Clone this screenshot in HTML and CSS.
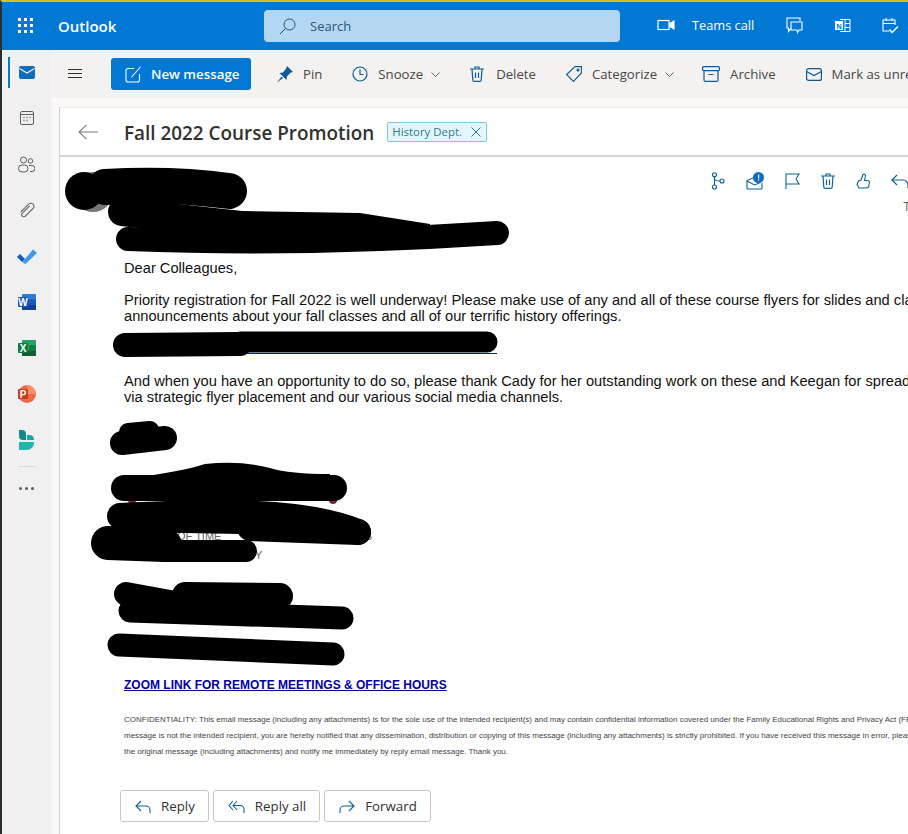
FILE: index.html
```html
<!DOCTYPE html>
<html lang="en">
<head>
  <meta charset="UTF-8">
  <title>Mail - Outlook</title>
  <link rel="stylesheet" href="styles.css">
</head>
<body>

<!-- Top bar -->
<header class="topbar">
  <div class="brand">
    <svg class="waffle" width="16" height="16" viewBox="0 0 16 16" fill="#fff">
      <rect x="0" y="0" width="3" height="3"/><rect x="6" y="0" width="3" height="3"/><rect x="12" y="0" width="3" height="3"/>
      <rect x="0" y="6" width="3" height="3"/><rect x="6" y="6" width="3" height="3"/><rect x="12" y="6" width="3" height="3"/>
      <rect x="0" y="12" width="3" height="3"/><rect x="6" y="12" width="3" height="3"/><rect x="12" y="12" width="3" height="3"/>
    </svg>
    <span class="brand-name">Outlook</span>
  </div>
  <div class="search">
    <svg width="17" height="17" viewBox="0 0 17 17" fill="none" stroke="#1d4f7c" stroke-width="1"><circle cx="10.500" cy="6.500" r="5.500"/><path d="M6.500 10.500L1 16"/></svg>
    <span>Search</span>
  </div>
  <div class="top-actions">
    <svg class="teams-icon" width="18" height="12" viewBox="0 0 18 12" fill="none" stroke="#fff" stroke-width="1.200"><rect x="1" y="1.500" width="11" height="9"/><path d="M12 5l5-3v8l-5-3" fill="#fff"/></svg>
    <span class="teams-label">Teams call</span>
    <svg class="top-icon" width="17" height="17" viewBox="0 0 17 17" fill="none" stroke="#fff" stroke-width="1.100"><path d="M14 4V1H1v10h1.500v3.500L5 11"/><path d="M5 5h11v8h-3l-1.500 2.500L11 13H5z"/></svg>
    <svg class="top-icon" width="17" height="17" viewBox="0 0 17 17" fill="none" stroke="#fff" stroke-width="1"><path d="M6 2.500h10v12H6"/><path d="M11 2.500v12M11 6.500h5M11 10.500h5"/><rect x="1" y="4" width="8" height="9" fill="#fff" stroke="none"/><text x="5" y="11.500" class="onenote-n">N</text></svg>
    <svg class="top-icon" width="17" height="17" viewBox="0 0 17 17" fill="none" stroke="#fff" stroke-width="1.100"><path d="M7 14H1V3h12v5"/><path d="M1 6.500h12M4 1v3M10 1v3"/><path d="M7.500 12.500l2.500 3 6-6" stroke-width="1.500"/></svg>
  </div>
</header>

<div class="app">

  <!-- App rail -->
  <nav class="rail">
    <div class="rail-item active">
      <svg width="16" height="13" viewBox="0 0 16 13"><rect width="16" height="13" rx="2" fill="#0f6cbd"/><path d="M0.500 2.500L8 7l7.500-4.500" fill="none" stroke="#f0f0f0" stroke-width="1.200"/></svg>
    </div>
    <div class="rail-item">
      <svg width="14" height="14" viewBox="0 0 14 14" fill="none" stroke="#5f5e5c"><rect x="0.500" y="0.500" width="13" height="13" rx="1.500"/><path d="M0.500 3.500h13"/><path d="M3.500 6.500h1M6.500 6.500h1M9.500 6.500h1M3.500 9.500h1M6.500 9.500h1" stroke-width="1.500"/></svg>
    </div>
    <div class="rail-item">
      <svg width="17" height="17" viewBox="0 0 17 17" fill="none" stroke="#5f5e5c"><circle cx="5.500" cy="4" r="3"/><circle cx="12.500" cy="5" r="2.300"/><rect x="0.500" y="9" width="9.500" height="7" rx="3.500"/><path d="M11 9.500h3a2.500 2.500 0 0 1 0 6h-2"/></svg>
    </div>
    <div class="rail-item">
      <svg width="16" height="17" viewBox="0 0 16 17" fill="none" stroke="#6b6a68" stroke-width="1.100"><path d="M10.500 4L3 11.500a2.200 2.200 0 0 0 3 3L14 6.500a3 3 0 0 0-4.300-4.300L1.800 10"/></svg>
    </div>
    <div class="rail-item">
      <svg width="20" height="15" viewBox="0 0 20 15"><path d="M0 8l3-3 5 5-3 3z" fill="#195abd"/><path d="M5 13l3-3 8-9.500L20 4 8.500 15z" fill="#3f97ea"/></svg>
    </div>
    <div class="rail-item">
      <svg width="18" height="16" viewBox="0 0 18 16"><rect x="4" width="14" height="16" rx="1" fill="#2b7cd3"/><rect x="4" y="5.300" width="14" height="5.400" fill="#185abd"/><rect x="4" y="10.700" width="14" height="5.300" fill="#103f91"/><rect y="3" width="10" height="10" rx="1" fill="#1f56a8"/><text x="5" y="11.500" class="office-letter">W</text></svg>
    </div>
    <div class="rail-item">
      <svg width="18" height="16" viewBox="0 0 18 16"><rect x="4" width="14" height="16" rx="1" fill="#21a366"/><rect x="11" y="5.300" width="7" height="5.400" fill="#107c41"/><rect x="4" y="10.700" width="14" height="5.300" fill="#185c37"/><rect y="3" width="10" height="10" rx="1" fill="#107c41"/><text x="5" y="11.500" class="office-letter">X</text></svg>
    </div>
    <div class="rail-item">
      <svg width="18" height="18" viewBox="0 0 18 18"><circle cx="9" cy="9" r="9" fill="#ed6c47"/><path d="M9 0a9 9 0 0 1 9 9H9z" fill="#ff8f6b"/><rect y="4" width="10" height="10" rx="1" fill="#c43e1c"/><text x="5" y="12.500" class="office-letter">P</text></svg>
    </div>
    <div class="rail-item">
      <svg width="15" height="20" viewBox="0 0 15 20"><path d="M0 0h3a4 4 0 0 1 4 4v6H4a4 4 0 0 1-4-4z" fill="#0f8a84"/><path d="M8 5h2.500A4.500 4.500 0 0 1 15 9.500V10H8z" fill="#15a8a0"/><path d="M0 12h15a7.500 7.500 0 0 1-7.500 8H0z" fill="#1fb8ad"/></svg>
    </div>
    <div class="rail-sep"></div>
    <div class="rail-more"><span></span><span></span><span></span></div>
  </nav>

  <main class="main">

    <!-- Command bar -->
    <div class="toolbar">
      <svg class="hamburger" width="14" height="10" viewBox="0 0 14 10" stroke="#323130"><path d="M0 .5h14M0 4.500h14M0 8.500h14"/></svg>
      <button class="new-msg">
        <svg width="17" height="17" viewBox="0 0 17 17" fill="none" stroke="#fff" stroke-width="1.100"><path d="M9 2.500H3a2 2 0 0 0-2 2V14a2 2 0 0 0 2 2h9.500a2 2 0 0 0 2-2V8"/><path d="M6.500 11L15.500 1"/></svg>
        New message
      </button>
      <div class="cmd">
        <svg width="16" height="17" viewBox="0 0 16 17" fill="#0f5a94"><path d="M10 0l6 6-2.500.8L10 10.500 9.500 14 2.500 7l3.500-.5L9.200 2.500z"/><path d="M4.500 10.500L0 16.500l6-4.500z"/></svg>
        <span>Pin</span>
      </div>
      <div class="cmd">
        <svg width="16" height="16" viewBox="0 0 16 16" fill="none" stroke="#0f5a94" stroke-width="1.200"><circle cx="8" cy="8" r="7"/><path d="M8 3.500V8.500h3.500"/></svg>
        <span>Snooze</span>
        <svg class="chev" width="9" height="5" viewBox="0 0 9 5" fill="none" stroke="#605e5c"><path d="M.5.500l4 4 4-4"/></svg>
      </div>
      <div class="cmd cmd-delete">
        <svg width="14" height="16" viewBox="0 0 14 16" fill="none" stroke="#0f5a94" stroke-width="1.200"><path d="M0 3h14M5 3V1h4v2"/><path d="M2 3l.8 11a1.500 1.500 0 0 0 1.500 1.400h5.400a1.500 1.500 0 0 0 1.500-1.400L12 3"/><path d="M5.500 6.500v5.500M8.500 6.500v5.500"/></svg>
        <span>Delete</span>
      </div>
      <div class="cmd">
        <svg width="16" height="16" viewBox="0 0 16 16" fill="none" stroke="#0f5a94" stroke-width="1.100"><path d="M9 .6h6.400V7L7.500 15.400.6 8.500z"/><circle cx="12" cy="4" r="1" fill="#0f5a94"/></svg>
        <span>Categorize</span>
        <svg class="chev" width="9" height="5" viewBox="0 0 9 5" fill="none" stroke="#605e5c"><path d="M.5.500l4 4 4-4"/></svg>
      </div>
      <div class="cmd cmd-archive">
        <svg width="18" height="16" viewBox="0 0 18 16" fill="none" stroke="#0f5a94" stroke-width="1.200"><rect x=".6" y=".6" width="16.800" height="4" rx="1"/><path d="M2 4.600V14a1.500 1.500 0 0 0 1.500 1.400h11A1.500 1.500 0 0 0 16 14V4.600M6.500 8.500h5"/></svg>
        <span>Archive</span>
      </div>
      <div class="cmd">
        <svg width="16" height="13" viewBox="0 0 16 13" fill="none" stroke="#0f5a94" stroke-width="1.200"><rect x=".6" y=".6" width="14.800" height="11.800" rx="2"/><path d="M.6 3.500L8 7.500l7.400-4"/></svg>
        <span>Mark as unread</span>
      </div>
    </div>

    <!-- Reading pane -->
    <section class="pane">
      <div class="subject-bar">
        <svg class="back" width="20" height="16" viewBox="0 0 20 16" fill="none" stroke="#7a7978" stroke-width="1.100"><path d="M20 8H1M8.500.8L1 8l7.500 7.200"/></svg>
        <h1 class="subject">Fall 2022 Course Promotion</h1>
        <span class="tag">History Dept.
          <svg width="10" height="10" viewBox="0 0 10 10" stroke="#38707f"><path d="M.5.500l9 9M9.500.500l-9 9"/></svg>
        </span>
      </div>

      <div class="message">
        <div class="msg-actions">
          <svg width="14" height="18" viewBox="0 0 14 18" fill="none" stroke="#0f6292" stroke-width="1.100"><circle cx="3.500" cy="2.800" r="2"/><circle cx="3.500" cy="15" r="2"/><circle cx="11" cy="9" r="2"/><path d="M3.500 4.800V13M3.500 6.500Q4 9 9 9"/></svg>
          <svg width="18" height="18" viewBox="0 0 18 18"><path d="M8 5.500L1 8.500V16a1 1 0 0 0 1 1h13a1 1 0 0 0 1-1v-5" fill="none" stroke="#0f6292" stroke-width="1.100"/><path d="M1 9l7.500 4 6-2.500" fill="none" stroke="#0f6292" stroke-width="1.100"/><circle cx="12.500" cy="5.500" r="5.500" fill="#0f6cbd"/><rect x="12" y="2.500" width="1.200" height="4" fill="#fff"/><rect x="12" y="7.300" width="1.200" height="1.200" fill="#fff"/></svg>
          <svg width="15" height="16" viewBox="0 0 15 16" fill="none" stroke="#0f6292" stroke-width="1.100"><path d="M1 16V1h13l-3 5 3 5H1"/></svg>
          <svg width="14" height="16" viewBox="0 0 14 16" fill="none" stroke="#0f6292" stroke-width="1.200"><path d="M0 3h14M5 3V1h4v2"/><path d="M2 3l.8 11a1.500 1.500 0 0 0 1.500 1.400h5.400a1.500 1.500 0 0 0 1.500-1.400L12 3"/><path d="M5.500 6.500v5.500M8.500 6.500v5.500"/></svg>
          <svg width="14" height="16" viewBox="0 0 14 16" fill="none" stroke="#0f6292" stroke-width="1.100"><path d="M7 1.500L5 7 2.500 8 1 11.500 3 15h6.500c2 0 3.500-1 3.500-3l.5-3c0-1-1-1.500-2-1.500H8.500L9.500 3C9.500 1.500 8 .500 7 1.500z"/></svg>
          <svg width="18" height="14" viewBox="0 0 18 14" fill="none" stroke="#0f6292" stroke-width="1.200"><path d="M6 1L1 6l5 5M1 6h11a5 5 0 0 1 5 5v3"/></svg>
        </div>
        <div class="msg-date">T</div>
        <div class="msg-body">
          <p>Dear Colleagues,</p>
          <p>Priority registration for Fall 2022 is well underway! Please make use of any and all of these course flyers for slides and class<br>announcements about your fall classes and all of our terrific history offerings.</p>
          <p class="flyer-link"></p>
          <p>And when you have an opportunity to do so, please thank Cady for her outstanding work on these and Keegan for spreading<br>via strategic flyer placement and our various social media channels.</p>
          <div class="signature">
            <div class="sig-line sig-first"><span>OF TIME</span><span>S</span></div>
            <div class="sig-line sig-second">Y</div>
          </div>
          <a class="zoom-link" href="#">ZOOM LINK FOR REMOTE MEETINGS &amp; OFFICE HOURS</a>
          <p class="legal">CONFIDENTIALITY: This email message (including any attachments) is for the sole use of the intended recipient(s) and may contain confidential information covered under the Family Educational Rights and Privacy Act (FERPA). If the reader of this<br>message is not the intended recipient, you are hereby notified that any dissemination, distribution or copying of this message (including any attachments) is strictly prohibited. If you have received this message in error, please<br>the original message (including attachments) and notify me immediately by reply email message. Thank you.</p>
        </div>
        <div class="reply-row">
          <button class="reply-btn">
            <svg width="16" height="13" viewBox="0 0 16 13" fill="none" stroke="#0f6292" stroke-width="1.100"><path d="M6 1L1 6l5 5M1 6h10a4 4 0 0 1 4 4v3"/></svg>
            Reply
          </button>
          <button class="reply-btn">
            <svg width="17" height="13" viewBox="0 0 17 13" fill="none" stroke="#0f6292" stroke-width="1.100"><path d="M5 1L1 5.500 5 10M9 1L5 5.500 9 10M5 5.500h7a4 4 0 0 1 4 4V13"/></svg>
            Reply all
          </button>
          <button class="reply-btn">
            <svg width="16" height="13" viewBox="0 0 16 13" fill="none" stroke="#0f6292" stroke-width="1.100"><path d="M10 1l5 5-5 5M15 6H5a4 4 0 0 0-4 4v3"/></svg>
            Forward
          </button>
        </div>
      </div>
    </section>
  </main>
</div>

<!-- Marker scribbles drawn over the picture -->
<svg class="scribbles" width="908" height="834" viewBox="0 0 908 834" fill="none" stroke="#000" stroke-linecap="round" stroke-linejoin="round">
  <circle cx="93" cy="192" r="20" fill="#777" stroke="none"/>
  <circle cx="132" cy="500" r="4" fill="#7a1f3d" stroke="none"/>
  <circle cx="333" cy="500" r="4" fill="#7a1f3d" stroke="none"/>
  <circle cx="84" cy="191" r="19" fill="#000" stroke="none"/>
  <path d="M105 187Q170 183 229 191" stroke-width="36"/>
  <path d="M122 212L250 226" stroke-width="28"/>
  <path d="M240 211L360 213L430 224L430 240L240 240Z" fill="#000" stroke="none"/>
  <path d="M128 239Q300 246 497 233" stroke-width="24"/>
  <path d="M125 345L240 344" stroke-width="24"/>
  <path d="M240 342L487 342" stroke-width="21"/>
  <path d="M122 443L165 438" stroke-width="24"/>
  <path d="M128 432L150 430" stroke-width="18"/>
  <path d="M124 488L334 488" stroke-width="26"/>
  <path d="M130 478Q180 472 205 464Q240 460 270 468Q290 474 330 474L330 500L130 500Z" fill="#000" stroke="none"/>
  <path d="M120 516C200 512 300 508 358 532" stroke-width="26"/>
  <path d="M130 520L240 522" stroke-width="24"/>
  <path d="M250 528L358 532" stroke-width="26"/>
  <path d="M108 543L165 545" stroke-width="34"/>
  <path d="M165 551L246 551" stroke-width="22"/>
  <path d="M126 594L170 602" stroke-width="24"/>
  <path d="M185 595L280 596" stroke-width="26"/>
  <path d="M130 611L342 618" stroke-width="23"/>
  <path d="M119 645L333 654" stroke-width="23"/>
</svg>

</body>
</html>
```

FILE: styles.css
```css
html, body { height: 100%; }
body { margin: 0; position: relative; overflow: hidden; box-sizing: border-box; border-top: 2px solid #d8bd2e; border-left: 2px solid #24312f; background: #fff; font-family: "Open Sans", sans-serif; color: #323130; display: flex; flex-direction: column; }
svg { flex: none; display: block; }

.topbar { height: 48px; flex: none; background: #0078d4; color: #fff; display: flex; align-items: center; }
.brand { width: 262px; display: flex; align-items: center; flex: none; }
.waffle { margin-left: 16px; }
.brand-name { margin-left: 24px; font-size: 15px; font-weight: 600; }
.search { width: 356px; height: 32px; flex: none; box-sizing: border-box; padding-left: 15px; background: #b3d6f2; border-radius: 4px; display: flex; align-items: center; gap: 14px; color: #2f5473; font-size: 13px; }
.top-actions { display: flex; align-items: center; margin-left: 37px; margin-top: -2px; flex: none; }
.teams-label { font-size: 12.800px; margin-left: 17px; margin-right: 32px; }
.top-icon { margin-right: 31px; }
.onenote-n { font: bold 7px "Open Sans", sans-serif; fill: #0078d4; stroke: none; text-anchor: middle; }

.app { flex: 1; min-height: 0; display: flex; }

.rail { width: 49px; flex: none; background: #f0f0f0; padding-top: 0; display: flex; flex-direction: column; align-items: center; }
.rail-item { height: 46px; width: 100%; flex: none; display: flex; align-items: center; justify-content: center; position: relative; top: -1px; }
.rail-item.active::before { content: ""; position: absolute; left: 6px; top: 8px; width: 2px; height: 31px; background: #0078d4; }
.office-letter { font: bold 10px "Liberation Sans", sans-serif; fill: #fff; text-anchor: middle; }
.rail-sep { width: 18px; height: 1px; background: #dcdbd9; margin-top: 2px; }
.rail-more { display: flex; gap: 3px; margin-top: 20px; }
.rail-more span { width: 3px; height: 3px; border-radius: 50%; background: #605e5c; }

.main { flex: 1; min-width: 0; display: flex; flex-direction: column; background: #faf9f8; overflow: hidden; }

.toolbar { height: 48px; flex: none; background: #f3f2f1; display: flex; align-items: center; gap: 30px; font-size: 13.200px; white-space: nowrap; }
.hamburger { margin-left: 17px; margin-right: -1px; }
.new-msg { width: 140px; height: 32px; flex: none; margin-right: -4px; border: none; border-radius: 3px; background: #0078d4; color: #fff; font: 600 13.300px "Open Sans", sans-serif; display: flex; align-items: center; gap: 9px; padding: 0 0 0 14px; }
.cmd { display: flex; align-items: center; gap: 10px; flex: none; color: #484644; }
.cmd-delete { gap: 12px; }
.cmd-archive { margin-left: -2px; }
.chev { margin-left: -2px; }

.pane { flex: 1; min-height: 0; margin: 9px 0 0 8px; background: #fff; border-top: 1px solid #eceae8; border-left: 1px solid #d2d0ce; display: flex; flex-direction: column; }
.subject-bar { height: 47px; flex: none; display: flex; align-items: center; white-space: nowrap; border-bottom: 2px solid #d6d5d3; }
.back { margin-left: 18px; }
.subject { margin: 2px 0 0 26px; font-size: 18.900px; font-weight: 600; color: #323130; }
.tag { margin-left: 13px; height: 20px; box-sizing: border-box; padding: 0 5px 0 4px; border: 1px solid #7cc8da; border-radius: 2px; background: #e4f6fb; color: #2e7a8c; font-size: 11.400px; display: flex; align-items: center; gap: 9px; }

.message { flex: 1; min-height: 0; overflow: hidden; display: flex; flex-direction: column; }
.msg-actions { height: 16px; margin-top: 16px; display: flex; align-items: center; gap: 21px; justify-content: flex-end; margin-right: -1px; }
.msg-date { height: 16px; margin-top: 10px; text-align: right; margin-right: -2px; font-size: 12px; color: #605e5c; line-height: 16px; }

.msg-body { padding: 45px 0 0 64px; font: 14.670px/16px "Liberation Sans", Arial, sans-serif; color: #111; white-space: nowrap; }
.msg-body p { margin: 0 0 16px; }
.msg-body .flyer-link { width: 373px; height: 13px; margin-bottom: 19px; border-bottom: 1px solid #0b1f8a; }
.signature { height: 272px; box-sizing: border-box; padding-top: 123px; margin-top: -16px; font-size: 11px; color: #666; }
.sig-line { height: 16px; line-height: 16px; }
.sig-first { display: flex; justify-content: space-between; width: 195px; margin-left: 53px; }
.sig-second { margin: 3px 0 0 131px; }
.zoom-link { display: block; font-weight: bold; font-size: 12px; color: #0000a0; text-decoration: underline; }
.msg-body .legal { margin: 19px 0 0; font-size: 8px; color: #444; }

.reply-row { display: flex; gap: 4px; margin: 30px 0 0 60px; }
.reply-btn { height: 32px; flex: none; box-sizing: border-box; padding: 0 13px 0 14px; border: 1px solid #c8c6c4; border-radius: 3px; background: #fff; color: #323130; font: 13.300px "Open Sans", sans-serif; display: flex; align-items: center; gap: 10px; }

.scribbles { position: absolute; left: -2px; top: -2px; pointer-events: none; }
```
